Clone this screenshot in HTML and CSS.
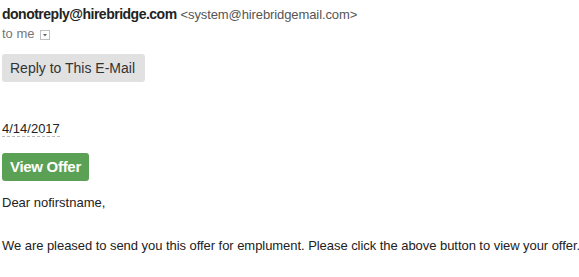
FILE: index.html
```html
<!DOCTYPE html>
<html>
<head>
<meta charset="UTF-8" />
<title>Offer</title>
<link rel="stylesheet" href="styles.css">
</head>
<body>
    <div class="header">
        <div class="from">
            <span class="sender">donotreply@hirebridge.com</span>
            <span class="address">&lt;system@hirebridgemail.com&gt;</span>
        </div>
        <div class="to">
            to me
            <span class="caret-box">
                <svg width="10" height="10" viewBox="0 0 10 10">
                    <rect x="0.5" y="0.5" width="9" height="9" fill="#fff" stroke="#c0c0c0" />
                    <path d="M3 4 L7 4 L5 6.5 Z" fill="#666" />
                </svg>
            </span>
        </div>
    </div>

    <div class="reply-row">
        <span class="reply-btn">Reply to This E-Mail</span>
    </div>

    <div class="message">
        <p class="date"><span class="date-text">4/14/2017</span></p>
        <p class="offer"><span class="offer-btn">View Offer</span></p>
        <p>Dear nofirstname,</p>
        <p class="body-text">We are pleased to send you this offer for emplument. Please click the above button to view your offer.</p>
    </div>
</body>
</html>
```

FILE: styles.css
```css
body {
    margin: 0;
    padding: 0 2px;
    font-family: "Liberation Sans", Arial, sans-serif;
    color: #222;
    background: #fff;
}

.header {
    padding-top: 5px;
}

.from {
    font-size: 14px;
    line-height: 18px;
    white-space: nowrap;
}

.sender {
    font-weight: bold;
    color: #222;
    letter-spacing: -0.5px;
}

.address {
    font-size: 13px;
    color: #555;
    letter-spacing: -0.1px;
}

.to {
    font-size: 13px;
    line-height: 16px;
    margin-top: 2px;
    color: #777;
    display: flex;
    align-items: center;
    gap: 5px;
}

.caret-box {
    display: flex;
    margin-top: 1px;
}

.reply-row {
    margin-top: 12px;
}

.reply-btn {
    display: inline-block;
    background: #e1e1e1;
    color: #333;
    font-size: 14px;
    line-height: 16px;
    padding: 6px 10px 6px 8px;
    border-radius: 3px;
}

.message {
    font-size: 13px;
    line-height: 16px;
    margin-top: 39px;
}

.message p {
    margin: 0 0 16px 0;
}

.date-text {
    border-bottom: 1px dashed #bbb;
}

.message .offer {
    margin-bottom: 14px;
}

.offer-btn {
    display: inline-block;
    background: #5ba155;
    color: #fff;
    font-weight: bold;
    font-size: 15px;
    letter-spacing: -0.3px;
    line-height: 16px;
    padding: 6px 8px;
    border-radius: 3px;
}

.message .body-text {
    margin-top: 27px;
    white-space: nowrap;
    letter-spacing: -0.05px;
}
```
